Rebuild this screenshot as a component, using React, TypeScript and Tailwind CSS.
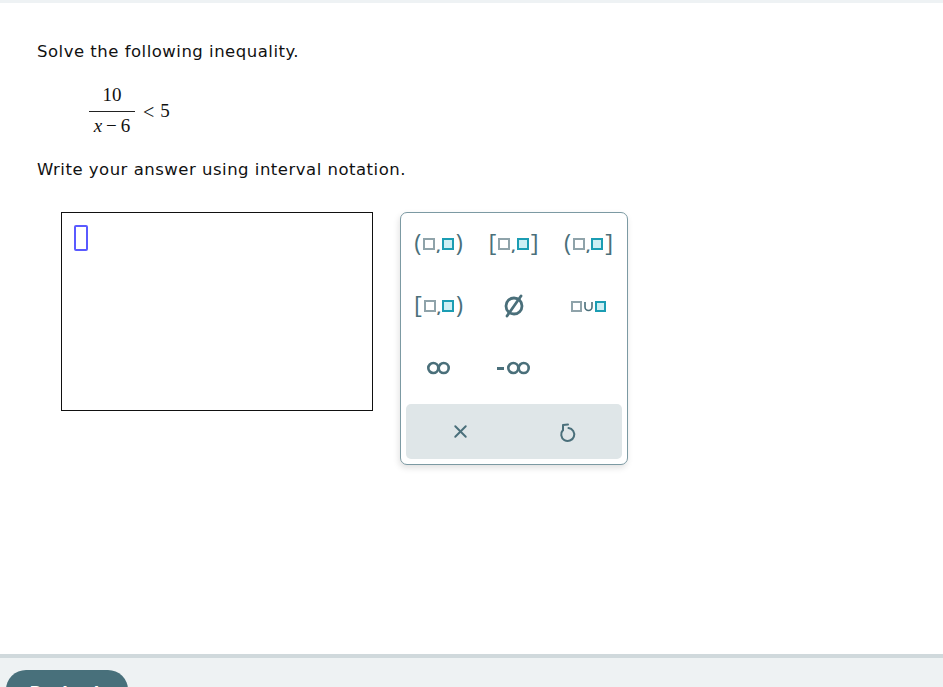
import React from 'react';
import { X } from 'lucide-react';

const teal = 'text-[#4a6f7a]';

function GraySq({ s = 'w-[12px] h-[12px]' }: { s?: string }) {
  return <span className={`inline-block ${s} border-2 border-[#8fa3aa] bg-white`} />;
}

function CyanSq({ s = 'w-[12px] h-[12px]' }: { s?: string }) {
  return <span className={`inline-block ${s} border-2 border-[#1b9db3] bg-[#cdeff4]`} />;
}

function Interval({ open, close }: { open: string; close: string }) {
  return (
    <span className={`flex items-center ${teal}`}>
      <span className="text-[24px] leading-none font-['Open_Sans',sans-serif] -mt-[4px]">{open}</span>
      <span className="flex items-end gap-[1px] mx-[2px]">
        <GraySq />
        <span className="text-[15px] leading-[10px] font-['Open_Sans',sans-serif] font-bold">,</span>
        <CyanSq />
      </span>
      <span className="text-[24px] leading-none font-['Open_Sans',sans-serif] -mt-[4px]">{close}</span>
    </span>
  );
}

function Infinity({ minus }: { minus?: boolean }) {
  return (
    <span className={`flex items-center gap-[3px] ${teal}`}>
      {minus && <span className="inline-block w-[7px] h-[3px] bg-[#4a6f7a]" />}
      <svg width="23" height="14" viewBox="0 0 23 14" fill="none" stroke="currentColor" strokeWidth="2.6">
        <circle cx="6.3" cy="7" r="5" />
        <circle cx="16.7" cy="7" r="5" />
      </svg>
    </span>
  );
}

function EmptySet() {
  return (
    <svg width="22" height="26" viewBox="0 0 22 26" fill="none" stroke="#4a6f7a" strokeWidth="2.8" strokeLinecap="round">
      <circle cx="11" cy="13" r="8" />
      <line x1="4" y1="23" x2="18" y2="3" />
    </svg>
  );
}

function Union() {
  return (
    <span className="flex items-center gap-[2px] text-[#4a6f7a]">
      <GraySq s="w-[11px] h-[11px]" />
      <svg width="9" height="11" viewBox="0 0 9 11" fill="none" stroke="currentColor" strokeWidth="1.6">
        <path d="M1 1v5a3.5 3.5 0 0 0 7 0V1" />
      </svg>
      <CyanSq s="w-[11px] h-[11px]" />
    </span>
  );
}

function Undo() {
  return (
    <svg width="20" height="22" viewBox="0 0 20 22" fill="none" stroke="#4a6f7a" strokeWidth="2" strokeLinecap="round" strokeLinejoin="round">
      <polyline points="10,3.5 5,4 5,9" />
      <path d="M5 9 A6.5 6.5 0 1 0 10.5 7" />
    </svg>
  );
}

function Key({ children }: { children?: React.ReactNode }) {
  return <button className="flex items-center justify-center">{children}</button>;
}

export default function App() {
  return (
    <div className="h-screen flex flex-col bg-white font-['DejaVu_Sans',sans-serif] text-[#111]">
      <div className="h-[3px] bg-[#eef2f4]" />

      <main className="flex-1 pl-[37px] pt-[37px]">
        <p className="text-[16.5px] tracking-[0.5px] leading-[24px]">Solve the following inequality.</p>

        <div className="mt-[19px] ml-[52px] flex items-center font-['Liberation_Serif',serif] text-[19px]">
          <div className="flex flex-col items-center w-[46px]">
            <div className="leading-[24px] pb-[4px]">10</div>
            <div className="w-full h-px bg-[#222]" />
            <div className="leading-[24px] pt-[2px]">
              <i>x</i>
              <span className="mx-[4px]">−</span>6
            </div>
          </div>
          <span className="ml-[8px] mt-[2px] text-[20px]">&lt;</span>
          <span className="ml-[6px] mt-[2px]">5</span>
        </div>

        <p className="mt-[20px] text-[16.5px] tracking-[0.5px] leading-[24px]">Write your answer using interval notation.</p>

        <div className="mt-[30px] flex items-start">
          <div className="ml-[24px] w-[312px] h-[199px] border border-[#111] pt-[12px] pl-[12px]">
            <div className="w-[14px] h-[26px] border-2 border-[#5a5aff] rounded-[2px]" />
          </div>

          <div className="ml-[27px] w-[228px] h-[253px] border border-[#7c9aa3] rounded-[7px] bg-white shadow-[-1px_3px_6px_rgba(0,0,0,0.12)]">
            <div className="grid grid-cols-[75px_75px_75px] auto-rows-[62px]">
              <Key><Interval open="(" close=")" /></Key>
              <Key><Interval open="[" close="]" /></Key>
              <Key><Interval open="(" close="]" /></Key>
              <Key><Interval open="[" close=")" /></Key>
              <Key><EmptySet /></Key>
              <Key><Union /></Key>
              <Key><Infinity /></Key>
              <Key><Infinity minus /></Key>
              <Key />
            </div>
            <div className="mx-[5px] mt-[5px] h-[55px] rounded-[5px] bg-[#dfe6e8] flex">
              <button className={`flex-1 flex items-center justify-center ${teal}`}>
                <X size={21} strokeWidth={2.2} />
              </button>
              <button className="flex-1 flex items-center justify-center">
                <Undo />
              </button>
            </div>
          </div>
        </div>
      </main>

      <footer className="h-[33px] overflow-hidden bg-[#eef2f3] border-t-4 border-[#d0d9dc]">
        <button className="ml-[6px] mt-[12px] w-[122px] h-[40px] rounded-full bg-[#48707b] text-white text-[16px] font-bold pt-[6px] leading-none">
          Recheck
        </button>
      </footer>
    </div>
  );
}
